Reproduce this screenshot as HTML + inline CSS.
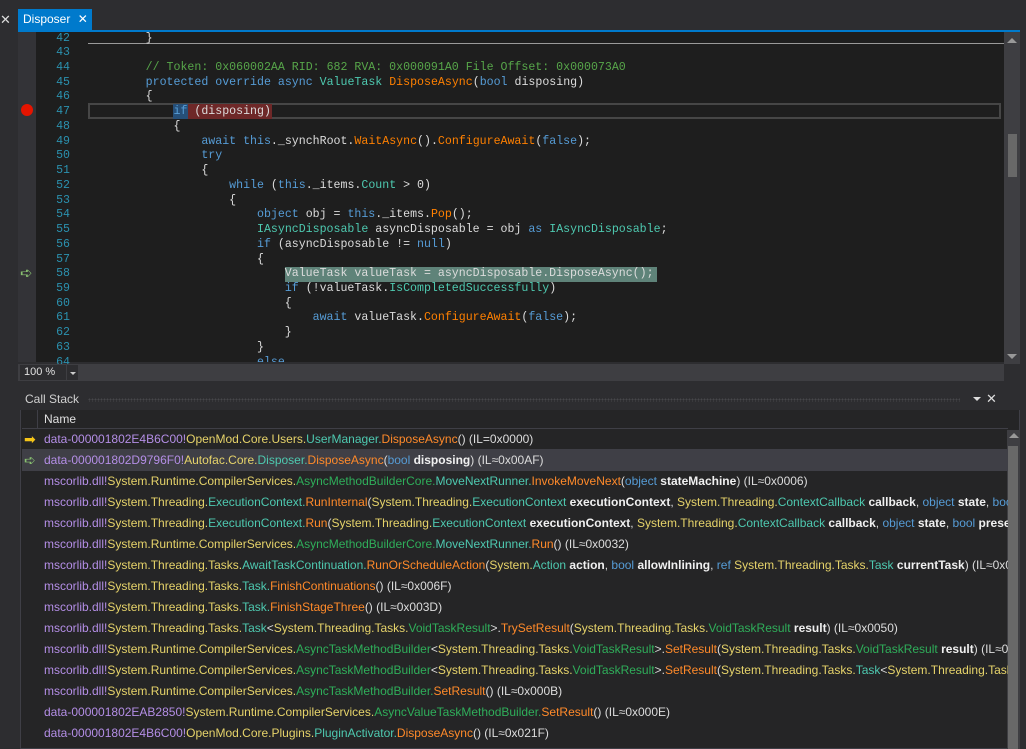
<!DOCTYPE html>
<html><head><meta charset="utf-8"><style>
*{margin:0;padding:0;box-sizing:border-box}
body{width:1026px;height:749px;background:#2d2d30;overflow:hidden;position:relative;font-family:"Liberation Sans",sans-serif}
.abs{position:absolute}
.code{position:absolute;left:90px;top:31.5px;font-family:"Liberation Mono",monospace;font-size:11.6px;line-height:14.73px;color:#dcdcdc;white-space:pre}
.ln{position:absolute;left:36px;top:31.5px;width:34px;text-align:right;font-family:"Liberation Mono",monospace;font-size:11.6px;line-height:14.73px;color:#2b91af;white-space:pre}
.k{color:#569cd6}.t{color:#4ec9b0}.m{color:#ff8000}.c{color:#57a64a}.p{color:#4ec9b0}
.rows{position:absolute;left:22px;top:429px;width:986px}
.row{height:21px;line-height:21px;font-size:12px;color:#dcdcdc;white-space:nowrap;overflow:hidden;padding-left:22px;position:relative}
.mo{color:#b48ee6}.ns{color:#e6d36a}.cl{color:#4ec9b0}.gr{color:#2fae5a}.me{color:#ff8a2a}.ty{color:#569cd6}.b{font-weight:bold;color:#f0f0f0}
</style></head><body>
<div class="abs" style="left:0;top:0;width:14px;height:749px;background:#2d2d30"></div>
<div class="abs" style="left:0;top:12px;color:#ddd;font-size:13px">✕</div>
<div class="abs" style="left:18px;top:9px;width:74px;height:22px;background:#007acc;color:#fff;font-size:12px;line-height:21px;padding-left:5px">Disposer <span style="margin-left:4px">✕</span></div>
<div class="abs" style="left:18px;top:30px;width:1002px;height:2px;background:#007acc"></div>
<div class="abs" style="left:18px;top:32px;width:986px;height:330px;background:#1e1e1e;overflow:hidden">
 <div class="abs" style="left:0;top:0;width:18px;height:330px;background:#333337"></div>
 <div class="abs" style="left:70px;top:11px;width:916px;height:1px;background:#9a9a9a"></div>
 <div class="abs" style="left:70px;top:71px;width:913px;height:16px;border:2px solid #464646"></div>
 <div class="abs" style="left:3px;top:72px;width:12px;height:12px;border-radius:50%;background:#e51400"></div>
 <div class="abs" style="left:2px;top:234px;color:#88c070;font-size:15px;line-height:15px">➪</div>
 <div class="abs" style="left:267px;top:235px;width:372px;height:15px;background:#5f8379"></div>
 <div class="abs" style="left:155px;top:72px;width:99px;height:15px;background:#6e2828"></div>
 <div class="abs" style="left:155px;top:72px;width:15px;height:15px;background:#264f78"></div>
</div>
<div class="ln">42
43
44
45
46
47
48
49
50
51
52
53
54
55
56
57
58
59
60
61
62
63
64</div>
<div class="code" style="height:330px;overflow:hidden;width:914px">        }

        <span class="c">// Token: 0x060002AA RID: 682 RVA: 0x000091A0 File Offset: 0x000073A0</span>
        <span class="k">protected override async</span> <span class="t">ValueTask</span> <span class="m">DisposeAsync</span>(<span class="k">bool</span> disposing)
        {
            <span class="k">if</span> (disposing)
            {
                <span class="k">await this</span>._synchRoot.<span class="m">WaitAsync</span>().<span class="m">ConfigureAwait</span>(<span class="k">false</span>);
                <span class="k">try</span>
                {
                    <span class="k">while</span> (<span class="k">this</span>._items.<span class="p">Count</span> &gt; 0)
                    {
                        <span class="k">object</span> obj = <span class="k">this</span>._items.<span class="m">Pop</span>();
                        <span class="t">IAsyncDisposable</span> asyncDisposable = obj <span class="k">as</span> <span class="t">IAsyncDisposable</span>;
                        <span class="k">if</span> (asyncDisposable != <span class="k">null</span>)
                        {
                            ValueTask valueTask = asyncDisposable.DisposeAsync();
                            <span class="k">if</span> (!valueTask.<span class="p">IsCompletedSuccessfully</span>)
                            {
                                <span class="k">await</span> valueTask.<span class="m">ConfigureAwait</span>(<span class="k">false</span>);
                            }
                        }
                        <span class="k">else</span></div>
<div class="abs" style="left:1004px;top:32px;width:16px;height:332px;background:#3e3e42"></div>
<div class="abs" style="left:1008px;top:134px;width:9px;height:43px;background:#686868"></div>
<div class="abs" style="left:1007px;top:38px;border:5px solid transparent;border-bottom:5px solid #999;border-top:0"></div>
<div class="abs" style="left:1007px;top:354px;border:5px solid transparent;border-top:5px solid #999;border-bottom:0"></div>
<div class="abs" style="left:18px;top:364px;width:986px;height:17px;background:#3e3e42"></div>
<div class="abs" style="left:20px;top:365px;width:46px;height:15px;background:#2d2d30;color:#e0e0e0;font-size:11px;line-height:15px;padding-left:4px">100 %</div>
<div class="abs" style="left:67px;top:365px;width:11px;height:15px;background:#2d2d30"></div>
<div class="abs" style="left:70px;top:372px;border:3px solid transparent;border-top:3px solid #ccc;border-bottom:0"></div>
<div class="abs" style="left:20px;top:389px;width:1000px;height:360px;background:#252526;border:1px solid #3f3f46"></div>
<div class="abs" style="left:20px;top:389px;width:1000px;height:21px;background:#2d2d30"></div>
<div class="abs" style="left:25px;top:389px;color:#d0d0d0;font-size:12px;line-height:21px">Call Stack</div>
<div class="abs" style="left:88px;top:398px;width:872px;height:4px;background-image:radial-gradient(#46464a 0.8px,transparent 1px);background-size:3px 3px"></div>
<div class="abs" style="left:973px;top:397px;border:4px solid transparent;border-top:4px solid #ddd;border-bottom:0"></div>
<div class="abs" style="left:986px;top:391px;color:#ddd;font-size:13px">✕</div>
<div class="abs" style="left:22px;top:410px;width:986px;height:19px;background:#252526;border-bottom:1px solid #3f3f46"></div>
<div class="abs" style="left:37px;top:410px;width:1px;height:19px;background:#3f3f46"></div>
<div class="abs" style="left:44px;top:410px;color:#e0e0e0;font-size:12px;line-height:19px">Name</div>
<div class="abs" style="left:1007px;top:430px;width:13px;height:319px;background:#3e3e42"></div>
<div class="abs" style="left:1008px;top:446px;width:10px;height:303px;background:#686868"></div>
<div class="abs" style="left:1009px;top:433px;border:5px solid transparent;border-bottom:5px solid #999;border-top:0"></div>
<div class="rows">
<div class="row" style="border-bottom:1px solid #3f3f46"><span class="abs" style="left:2px;top:0;color:#f5c518;font-size:14px">➡</span><span class="mo">data-000001802E4B6C00!</span><span class="ns">OpenMod.Core.Users.</span><span class="cl">UserManager.</span><span class="me">DisposeAsync</span>() (IL=0x0000)</div>
<div class="row" style="background:#3f3f46"><span class="abs" style="left:2px;top:0;color:#88c070;font-size:14px">➪</span><span class="mo">data-000001802D9796F0!</span><span class="ns">Autofac.Core.</span><span class="cl">Disposer.</span><span class="me">DisposeAsync</span>(<span class="ty">bool</span> <span class="b">disposing</span>) (IL≈0x00AF)</div>
<div class="row"><span class="mo">mscorlib.dll!</span><span class="ns">System.Runtime.CompilerServices.</span><span class="gr">AsyncMethodBuilderCore.</span><span class="cl">MoveNextRunner.</span><span class="me">InvokeMoveNext</span>(<span class="ty">object</span> <span class="b">stateMachine</span>) (IL≈0x0006)</div>
<div class="row"><span class="mo">mscorlib.dll!</span><span class="ns">System.Threading.</span><span class="cl">ExecutionContext.</span><span class="me">RunInternal</span>(<span class="ns">System.Threading.</span><span class="cl">ExecutionContext</span> <span class="b">executionContext</span>, <span class="ns">System.Threading.</span><span class="cl">ContextCallback</span> <span class="b">callback</span>, <span class="ty">object</span> <span class="b">state</span>, <span class="ty">bool</span> preserveSyncCtx)</div>
<div class="row"><span class="mo">mscorlib.dll!</span><span class="ns">System.Threading.</span><span class="cl">ExecutionContext.</span><span class="me">Run</span>(<span class="ns">System.Threading.</span><span class="cl">ExecutionContext</span> <span class="b">executionContext</span>, <span class="ns">System.Threading.</span><span class="cl">ContextCallback</span> <span class="b">callback</span>, <span class="ty">object</span> <span class="b">state</span>, <span class="ty">bool</span> <span class="b">preserveSyncCtx</span>)</div>
<div class="row"><span class="mo">mscorlib.dll!</span><span class="ns">System.Runtime.CompilerServices.</span><span class="gr">AsyncMethodBuilderCore.</span><span class="cl">MoveNextRunner.</span><span class="me">Run</span>() (IL≈0x0032)</div>
<div class="row"><span class="mo">mscorlib.dll!</span><span class="ns">System.Threading.Tasks.</span><span class="cl">AwaitTaskContinuation.</span><span class="me">RunOrScheduleAction</span>(<span class="ns">System.</span><span class="cl">Action</span> <span class="b">action</span>, <span class="ty">bool</span> <span class="b">allowInlining</span>, <span class="ty">ref</span> <span class="ns">System.Threading.Tasks.</span><span class="cl">Task</span> <span class="b">currentTask</span>) (IL≈0x001D)</div>
<div class="row"><span class="mo">mscorlib.dll!</span><span class="ns">System.Threading.Tasks.</span><span class="cl">Task.</span><span class="me">FinishContinuations</span>() (IL≈0x006F)</div>
<div class="row"><span class="mo">mscorlib.dll!</span><span class="ns">System.Threading.Tasks.</span><span class="cl">Task.</span><span class="me">FinishStageThree</span>() (IL≈0x003D)</div>
<div class="row"><span class="mo">mscorlib.dll!</span><span class="ns">System.Threading.Tasks.</span><span class="cl">Task</span>&lt;<span class="ns">System.Threading.Tasks.</span><span class="gr">VoidTaskResult</span>&gt;.<span class="me">TrySetResult</span>(<span class="ns">System.Threading.Tasks.</span><span class="gr">VoidTaskResult</span> <span class="b">result</span>) (IL≈0x0050)</div>
<div class="row"><span class="mo">mscorlib.dll!</span><span class="ns">System.Runtime.CompilerServices.</span><span class="gr">AsyncTaskMethodBuilder</span>&lt;<span class="ns">System.Threading.Tasks.</span><span class="gr">VoidTaskResult</span>&gt;.<span class="me">SetResult</span>(<span class="ns">System.Threading.Tasks.</span><span class="gr">VoidTaskResult</span> <span class="b">result</span>) (IL≈0x0040)</div>
<div class="row"><span class="mo">mscorlib.dll!</span><span class="ns">System.Runtime.CompilerServices.</span><span class="gr">AsyncTaskMethodBuilder</span>&lt;<span class="ns">System.Threading.Tasks.</span><span class="gr">VoidTaskResult</span>&gt;.<span class="me">SetResult</span>(<span class="ns">System.Threading.Tasks.</span><span class="cl">Task</span>&lt;<span class="ns">System.Threading.Tasks.</span><span class="gr">VoidTaskResult</span>&gt;)</div>
<div class="row"><span class="mo">mscorlib.dll!</span><span class="ns">System.Runtime.CompilerServices.</span><span class="gr">AsyncTaskMethodBuilder.</span><span class="me">SetResult</span>() (IL≈0x000B)</div>
<div class="row"><span class="mo">data-000001802EAB2850!</span><span class="ns">System.Runtime.CompilerServices.</span><span class="gr">AsyncValueTaskMethodBuilder.</span><span class="me">SetResult</span>() (IL≈0x000E)</div>
<div class="row"><span class="mo">data-000001802E4B6C00!</span><span class="ns">OpenMod.Core.Plugins.</span><span class="cl">PluginActivator.</span><span class="me">DisposeAsync</span>() (IL≈0x021F)</div>
</div>
</body></html>
